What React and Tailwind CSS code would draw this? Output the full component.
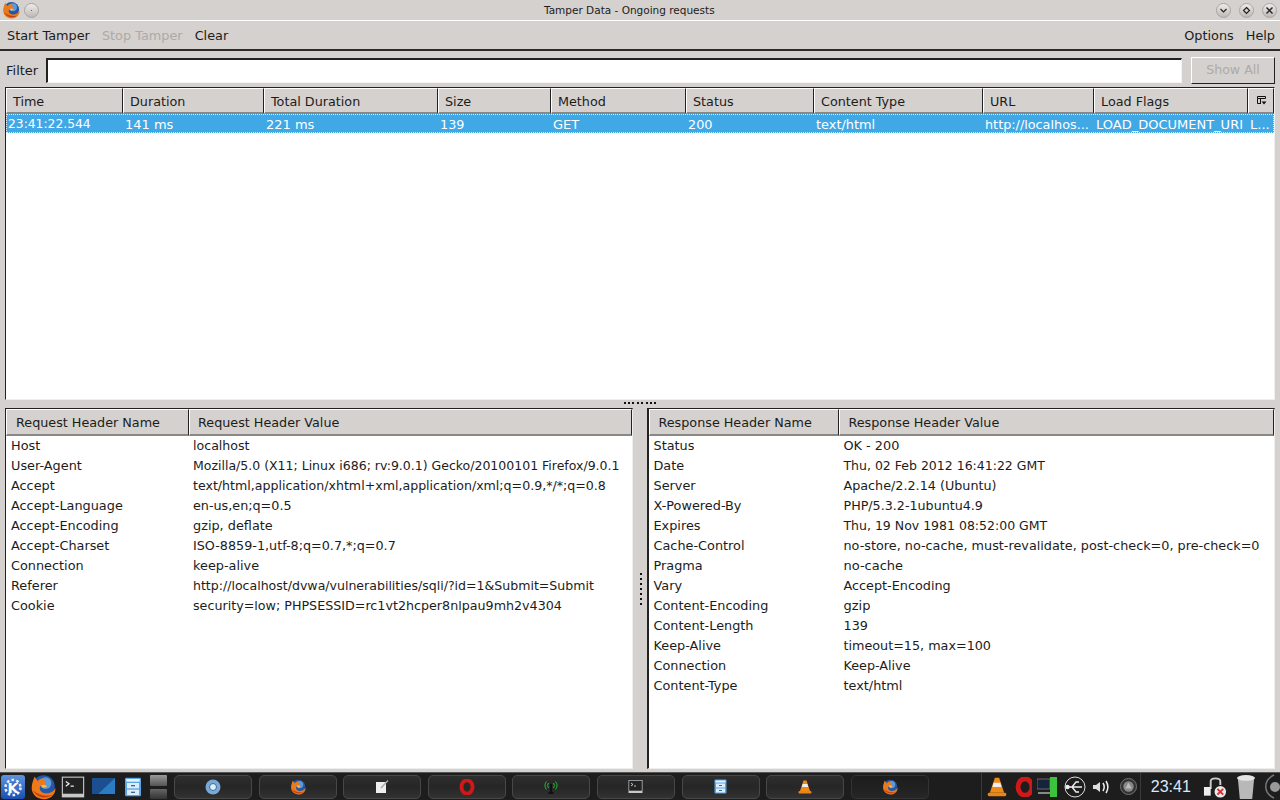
import React from "react"

const columns = [
  { name: "Time", width: "w-[117px]", value: "23:41:22.544", size: "text-[12.3px]" },
  { name: "Duration", width: "w-[141px]", value: "141 ms", size: "text-[13px]" },
  { name: "Total Duration", width: "w-[174px]", value: "221 ms", size: "text-[13px]" },
  { name: "Size", width: "w-[113px]", value: "139", size: "text-[12.8px]" },
  { name: "Method", width: "w-[135px]", value: "GET", size: "text-[13px]" },
  { name: "Status", width: "w-[128px]", value: "200", size: "text-[12.8px]" },
  { name: "Content Type", width: "w-[169px]", value: "text/html", size: "text-[12.9px]" },
  { name: "URL", width: "w-[111px]", value: "http://localhos...", size: "text-[12.8px]" },
  { name: "Load Flags", width: "w-[154px]", value: "LOAD_DOCUMENT_URI", size: "text-[13px]" },
]

const requestHeaders = [
  ["Host", "localhost", "text-[12.6px]"],
  ["User-Agent", "Mozilla/5.0 (X11; Linux i686; rv:9.0.1) Gecko/20100101 Firefox/9.0.1", "text-[12.5px]"],
  ["Accept", "text/html,application/xhtml+xml,application/xml;q=0.9,*/*;q=0.8", "text-[12.6px]"],
  ["Accept-Language", "en-us,en;q=0.5", "text-[12.75px]"],
  ["Accept-Encoding", "gzip, deflate", "text-[12.85px]"],
  ["Accept-Charset", "ISO-8859-1,utf-8;q=0.7,*;q=0.7", "text-[12.75px]"],
  ["Connection", "keep-alive", "text-[12.85px]"],
  ["Referer", "http://localhost/dvwa/vulnerabilities/sqli/?id=1&Submit=Submit", "text-[12.55px]"],
  ["Cookie", "security=low; PHPSESSID=rc1vt2hcper8nlpau9mh2v4304", "text-[12.7px]"],
]

const responseHeaders = [
  ["Status", "OK - 200", "text-[12.85px]"],
  ["Date", "Thu, 02 Feb 2012 16:41:22 GMT", "text-[12.5px]"],
  ["Server", "Apache/2.2.14 (Ubuntu)", "text-[12.75px]"],
  ["X-Powered-By", "PHP/5.3.2-1ubuntu4.9", "text-[12.7px]"],
  ["Expires", "Thu, 19 Nov 1981 08:52:00 GMT", "text-[12.5px]"],
  ["Cache-Control", "no-store, no-cache, must-revalidate, post-check=0, pre-check=0", "text-[12.8px]"],
  ["Pragma", "no-cache", "text-[13px]"],
  ["Vary", "Accept-Encoding", "text-[12.8px]"],
  ["Content-Encoding", "gzip", "text-[13px]"],
  ["Content-Length", "139", "text-[12.8px]"],
  ["Keep-Alive", "timeout=15, max=100", "text-[12.75px]"],
  ["Connection", "Keep-Alive", "text-[12.75px]"],
  ["Content-Type", "text/html", "text-[12.85px]"],
]

function Firefox({ size = 20 }) {
  return (
    <svg width={size} height={size} viewBox="0 0 20 20">
      <circle cx="10.5" cy="9.5" r="8.5" fill="#2458a6" />
      <circle cx="12" cy="7" r="4.5" fill="#5f9ad8" />
      <path d="M3.5 2 C2 6 0 11 2.5 15 C5.5 20 13.5 21 17.5 16.5 C19 14.8 19.7 12.8 19.5 10.5 C18 14 14 15.6 10.5 14.6 C7.5 13.6 6.5 10.5 8.5 8.8 C9.6 8 11.2 8 12.4 8.8 C12.4 6.6 11.5 4.6 9.5 3.2 C8 3.5 6.6 4.4 6 5.6 C5.2 4.6 4.2 3.4 3.5 2 Z" fill="#ec7a1a" />
      <path d="M2.5 12.5 C4.5 18 12.5 20 17 16 C12.5 17.6 6.5 16.5 2.5 12.5 Z" fill="#c63f0e" />
      <path d="M8.5 8.8 C9.6 8 11.2 8 12.4 8.8 L13 10 L10 10.5 Z" fill="#f7c04a" />
    </svg>
  )
}

function KdeLogo() {
  return (
    <svg width="24" height="24" viewBox="0 0 24 24">
      <defs>
        <linearGradient id="kde" x1="0" y1="0" x2="0" y2="1">
          <stop offset="0" stopColor="#5f93e0" />
          <stop offset="1" stopColor="#1c4fae" />
        </linearGradient>
      </defs>
      <rect width="24" height="24" rx="3" fill="url(#kde)" />
      <circle cx="12" cy="12.5" r="7.5" fill="none" stroke="#e8f0fb" strokeWidth="2.6" strokeDasharray="2.6 2.2" />
      <circle cx="12" cy="12.5" r="6" fill="#3f74cc" />
      <text x="12" y="17.5" textAnchor="middle" fontSize="14" fontWeight="700" fill="#fff" fontFamily="'DejaVu Sans', sans-serif">K</text>
    </svg>
  )
}

function RoundButton({ children, className = "" }) {
  return (
    <div className={`flex h-[15px] w-[15px] items-center justify-center rounded-full border border-[#a9a5a2] bg-gradient-to-b from-[#eeecea] to-[#bdb9b6] ${className}`}>
      {children}
    </div>
  )
}

function TitleBar() {
  return (
    <div className="relative flex h-[20px] items-center bg-[#d5d1ce]">
      <div className="ml-[1px] flex w-[20px] items-center justify-center">
        <Firefox size={18} />
      </div>
      <RoundButton className="ml-[3px]">
        <div className="h-[1px] w-[1px] bg-[#666]" />
      </RoundButton>
      <div className="flex-1 pl-[505px] pt-[2px] text-[10.5px] text-[#1c1c1c]">Tamper Data - Ongoing requests</div>
      <div className="flex items-center gap-[8px] pr-[3px]">
        <RoundButton>
          <svg width="9" height="9" viewBox="0 0 9 9"><path d="M1.5 3 L4.5 6 L7.5 3" fill="none" stroke="#222" strokeWidth="1.2" /></svg>
        </RoundButton>
        <RoundButton>
          <svg width="9" height="9" viewBox="0 0 9 9"><path d="M4.5 1.5 L7.5 4.5 L4.5 7.5 L1.5 4.5 Z" fill="none" stroke="#222" strokeWidth="1.2" /></svg>
        </RoundButton>
        <RoundButton>
          <svg width="9" height="9" viewBox="0 0 9 9"><path d="M1.5 1.5 L7.5 7.5 M7.5 1.5 L1.5 7.5" fill="none" stroke="#222" strokeWidth="1.4" /></svg>
        </RoundButton>
      </div>
    </div>
  )
}

function MenuBar() {
  return (
    <div className="flex h-[31px] items-center border-t border-b-2 border-t-white border-b-[#2a2a2a] pl-[7px] pr-[5px] pt-[2px] text-[12.85px] text-[#1c1c1c]">
      <span>Start Tamper</span>
      <span className="ml-[12px] text-[#aeaaa7]">Stop Tamper</span>
      <span className="ml-[12px]">Clear</span>
      <span className="ml-auto">Options</span>
      <span className="ml-[12px]">Help</span>
    </div>
  )
}

function FilterRow() {
  return (
    <div className="mt-[6px] flex h-[27px] items-center pl-[6px] pr-[5px] text-[13px] text-[#1c1c1c]">
      <span className="w-[40px]">Filter</span>
      <div className="h-[25px] w-[1136px] border border-t-2 border-l-2 border-t-[#222] border-l-[#222] border-r-[#f4f3f2] border-b-[#f4f3f2] bg-white" />
      <div className="ml-[9px] flex h-[27px] flex-1 items-center justify-center border border-t-white border-l-white border-r-[#222] border-b-[#222] text-[12.6px] text-[#aeaaa7]">
        Show All
      </div>
    </div>
  )
}

function HeaderCell({ width, children, pad = "pl-[6px]", top = "pt-[2px]" }) {
  return (
    <div className={`${width} ${pad} ${top} flex h-full shrink-0 items-center border-l border-t border-r border-b-2 border-l-white border-t-white border-r-[#222] border-b-[#8a8784] text-[12.75px] text-[#1c1c1c]`}>
      {children}
    </div>
  )
}

function RequestTable() {
  return (
    <div className="mx-[5px] mt-[3px] h-[313px] border border-[#222] border-r-[#eee] border-b-[#eee] bg-white">
      <div className="flex h-[26px] bg-[#d5d1ce]">
        {columns.map((col) => (
          <HeaderCell key={col.name} width={col.width}>{col.name}</HeaderCell>
        ))}
        <HeaderCell width="flex-1" pad="pl-[7px]" top="pt-0">
          <svg width="11" height="11" viewBox="0 0 11 11">
            <path d="M1.5 1.5 H9.5 V3.5 H1.5 Z M1.5 3.5 V8.5 H5 M4.5 3.5 V8.5" fill="none" stroke="#111" />
            <path d="M5.5 6.5 H10.5 L8 9.5 Z" fill="#111" />
          </svg>
        </HeaderCell>
      </div>
      <div className="flex h-[19px] items-center border border-dotted border-[#dfeaf4] bg-[#41a8e6] pt-[2px] text-white">
        {columns.map((col) => (
          <div key={col.name} className={`${col.width} ${col.size} shrink-0 whitespace-nowrap pl-[1px]`}>{col.value}</div>
        ))}
        <div className="flex-1 pl-[1px] text-[13px]">L...</div>
      </div>
    </div>
  )
}

function HeaderPanel({ nameLabel, valueLabel, rows, headWidth, rowWidth, edge, namePad, rowPad }) {
  return (
    <div className={`h-[361px] w-[628px] border border-t-2 border-[#222] border-r-[#eee] border-b-[#eee] bg-white ${edge}`}>
      <div className="-mt-[1px] flex h-[27px] bg-[#d5d1ce]">
        <HeaderCell width={headWidth} pad={namePad} top="pt-[2px]">{nameLabel}</HeaderCell>
        <HeaderCell width="flex-1" pad="pl-[8px]" top="pt-[2px]">{valueLabel}</HeaderCell>
      </div>
      {rows.map(([name, value, size]) => (
        <div key={name} className={`flex h-[20px] items-center whitespace-nowrap text-[#1c1c1c] ${rowPad}`}>
          <div className={`${rowWidth} text-[12.85px]`}>{name}</div>
          <div className={size}>{value}</div>
        </div>
      ))}
    </div>
  )
}

function SplitterDots({ vertical }) {
  const dots = vertical ? [0, 1, 2, 3, 4, 5, 6] : [0, 1, 2, 3, 4, 5, 6, 7]
  return (
    <div className={vertical ? "flex flex-col gap-[3px]" : "flex gap-[2.4px]"}>
      {dots.map((d) => (
        <div key={d} className="h-[2px] w-[2px] bg-[#111]" />
      ))}
    </div>
  )
}

function TaskButton({ children, width = "w-[78px]", active }) {
  const look = active
    ? "border-[#333] from-[#1c1c1c] to-[#262626]"
    : "border-[#474747] from-[#2e2e2e] via-[#262626] to-[#323232]"
  return (
    <div className={`${width} ${look} flex h-[24px] shrink-0 items-center justify-center rounded-[5px] border bg-gradient-to-b`}>
      {children}
    </div>
  )
}

const TerminalIcon = ({ size = 15 }) => (
  <svg width={size} height={size} viewBox="0 0 15 15">
    <rect x="0.5" y="1" width="14" height="13" fill="#c8c8c8" />
    <rect x="1.2" y="1.7" width="12.6" height="10" fill="#222" />
    <path d="M3 4 L5 5.5 L3 7 M6 7 H8" stroke="#eee" fill="none" strokeWidth="0.8" />
  </svg>
)

const FilesIcon = ({ size = 15 }) => (
  <svg width={size} height={size} viewBox="0 0 15 15">
    <rect x="1.5" y="0.5" width="12" height="14" fill="#5aa5e6" rx="1" />
    <rect x="2.5" y="1.5" width="10" height="2" fill="#e8f2fb" />
    <rect x="3" y="4.5" width="9" height="4" fill="#dcecfa" />
    <rect x="3" y="9.5" width="9" height="4" fill="#dcecfa" />
    <rect x="6" y="6" width="3" height="1" fill="#33689c" />
    <rect x="6" y="11" width="3" height="1" fill="#33689c" />
  </svg>
)

const VlcIcon = ({ size = 14 }) => (
  <svg width={size} height={size} viewBox="0 0 14 14">
    <path d="M5.5 0.5 H8.5 L12 11 H2 Z" fill="#f08a16" />
    <path d="M4.6 4 H9.4 L10.2 7 H3.8 Z" fill="#eee" />
    <rect x="0.5" y="11" width="13" height="2.5" rx="1" fill="#e8841a" />
  </svg>
)

const OperaIcon = ({ size = 15 }) => (
  <svg width={size} height={size} viewBox="0 0 15 15">
    <ellipse cx="7.5" cy="7.5" rx="5.2" ry="6.2" fill="none" stroke="#d01818" strokeWidth="3.6" />
  </svg>
)

function TaskBar() {
  return (
    <div className="mt-[3px] flex h-[28px] items-center overflow-hidden border-t border-t-[#555] bg-[#1d1d1d] [&>*]:shrink-0">
      <div className="ml-[1px]"><KdeLogo /></div>
      <div className="ml-[5px]"><Firefox size={26} /></div>
      <div className="ml-[5px]"><TerminalIcon size={24} /></div>
      <svg className="ml-[7px]" width="23" height="18" viewBox="0 0 23 18">
        <rect width="23" height="18" fill="#1b4f8f" />
        <path d="M23 0 V18 H4 Z" fill="#2c7cc4" />
        <rect y="16" width="23" height="2" fill="#0e1c30" />
      </svg>
      <div className="ml-[8px]"><FilesIcon size={20} /></div>
      <div className="ml-[7px] flex flex-col gap-[3px]">
        <div className="h-[11px] w-[17px] rounded-[1px] bg-gradient-to-b from-[#9a9a9a] to-[#555]" />
        <div className="h-[10px] w-[17px] rounded-[1px] bg-gradient-to-b from-[#666] to-[#333]" />
      </div>
      <div className="ml-[7px] flex items-center gap-[6.6px]">
        <TaskButton>
          <svg width="16" height="16" viewBox="0 0 16 16">
            <circle cx="8" cy="8" r="7.5" fill="#7ba9d6" />
            <circle cx="8" cy="8" r="3.5" fill="#dcecf8" stroke="#3a6a9c" />
          </svg>
        </TaskButton>
        <TaskButton><Firefox size={16} /></TaskButton>
        <TaskButton>
          <svg width="15" height="15" viewBox="0 0 15 15">
            <rect x="1" y="3" width="10" height="11" fill="#eee" />
            <path d="M6 9 L13 1.5" stroke="#aaa" strokeWidth="1.4" />
          </svg>
        </TaskButton>
        <TaskButton><OperaIcon size={16} /></TaskButton>
        <TaskButton>
          <svg width="16" height="16" viewBox="0 0 16 16">
            <path d="M8 5 V14 M5.5 14 H10.5" stroke="#111" strokeWidth="2" />
            <path d="M3.5 2.5 C1.5 5 1.5 8 3.5 10.5 M12.5 2.5 C14.5 5 14.5 8 12.5 10.5 M5.5 4 C4.5 5.5 4.5 7.5 5.5 9 M10.5 4 C11.5 5.5 11.5 7.5 10.5 9" fill="none" stroke="#1bcf3a" />
          </svg>
        </TaskButton>
        <TaskButton><TerminalIcon /></TaskButton>
        <TaskButton><FilesIcon /></TaskButton>
        <TaskButton><VlcIcon /></TaskButton>
        <TaskButton active><Firefox size={16} /></TaskButton>
      </div>
      <div className="ml-[52px] flex h-full items-center border-l border-[#3a3a3a] pl-[5px] [&>*]:shrink-0">
        <VlcIcon size={20} />
        <div className="ml-[8px] w-[17px] overflow-hidden"><OperaIcon size={20} /></div>
        <svg className="ml-[5px]" width="20" height="20" viewBox="0 0 20 20">
          <rect x="0" y="2" width="13" height="10" fill="#16233a" stroke="#999" strokeWidth="0.6" />
          <rect x="1" y="15" width="13" height="2" fill="#888" />
          <rect x="13" y="0" width="7" height="20" fill="#3bc43b" />
        </svg>
        <svg className="ml-[7px]" width="22" height="22" viewBox="0 0 22 22">
          <circle cx="11" cy="11" r="10" fill="none" stroke="#ddd" />
          <path d="M3 11 H18 M8 11 L12 6 H15 M8 11 L12 16 H15" fill="none" stroke="#eee" strokeWidth="1.4" />
          <circle cx="3.5" cy="11" r="2.2" fill="#eee" />
        </svg>
        <svg className="ml-[6px]" width="18" height="16" viewBox="0 0 18 16">
          <path d="M1 6 H4 L8 3 V13 L4 10 H1 Z" fill="#ddd" />
          <path d="M11 4 C12.5 6.5 12.5 9.5 11 12 M14 2 C16.5 6 16.5 10 14 14" fill="none" stroke="#eee" strokeWidth="1.5" />
        </svg>
        <svg className="ml-[10px]" width="17" height="17" viewBox="0 0 18 18">
          <circle cx="9" cy="9" r="8.5" fill="#333" stroke="#777" />
          <circle cx="9" cy="9" r="5.5" fill="#888" />
          <path d="M9 5 L12.5 11 H5.5 Z" fill="#bbb" />
        </svg>
      </div>
      <div className="ml-[3px] flex h-full items-center border-l border-[#3a3a3a] pl-[10px] [&>*]:shrink-0">
        <span className="font-['Liberation_Sans',sans-serif] text-[16px] leading-none text-[#dce8f8]">23:41</span>
        <svg className="ml-[12px]" width="25" height="24" viewBox="0 0 26 24">
          <path d="M8 14 V6 C8 2 18 2 18 6 V10" fill="none" stroke="#ccc" strokeWidth="2" />
          <rect x="1" y="12" width="7" height="9" fill="#eee" />
          <circle cx="18" cy="17" r="6" fill="#e9e9e9" />
          <path d="M15 14 L21 20 M21 14 L15 20" stroke="#d03030" strokeWidth="2" />
        </svg>
        <svg className="ml-[8px]" width="20" height="26" viewBox="0 0 21 27">
          <path d="M2 5 H19 L17 26 H4 Z" fill="#b8b8b8" />
          <ellipse cx="10.5" cy="4" rx="9.5" ry="3" fill="#e2e2e2" />
        </svg>
        <svg className="ml-[6px]" width="18" height="25" viewBox="0 0 18 25">
          <path d="M12 1 C1 6 1 19 12 24" fill="none" stroke="#777" strokeWidth="1.5" />
          <circle cx="13" cy="13" r="5" fill="#999" />
        </svg>
      </div>
    </div>
  )
}

export default function App() {
  return (
    <div className="flex h-[800px] w-[1280px] flex-col overflow-hidden bg-[#d5d1ce] font-['DejaVu_Sans',sans-serif]">
      <TitleBar />
      <MenuBar />
      <FilterRow />
      <RequestTable />
      {/* horizontal splitter */}
      <div className="flex h-[8px] justify-center pt-[2px]"><SplitterDots /></div>
      <div className="flex px-[5px]">
        <HeaderPanel
          nameLabel="Request Header Name"
          valueLabel="Request Header Value"
          rows={requestHeaders}
          headWidth="w-[183px]"
          rowWidth="w-[182px]"
          edge="border-l"
          namePad="pl-[9px]"
          rowPad="pl-[5px]"
        />
        <div className="flex w-[15px] items-center justify-center pl-[2px]"><SplitterDots vertical /></div>
        <HeaderPanel
          nameLabel="Response Header Name"
          valueLabel="Response Header Value"
          rows={responseHeaders}
          headWidth="w-[190px]"
          rowWidth="w-[190px]"
          edge="border-l-2"
          namePad="pl-[8px]"
          rowPad="pl-[4px]"
        />
      </div>
      <TaskBar />
    </div>
  )
}
